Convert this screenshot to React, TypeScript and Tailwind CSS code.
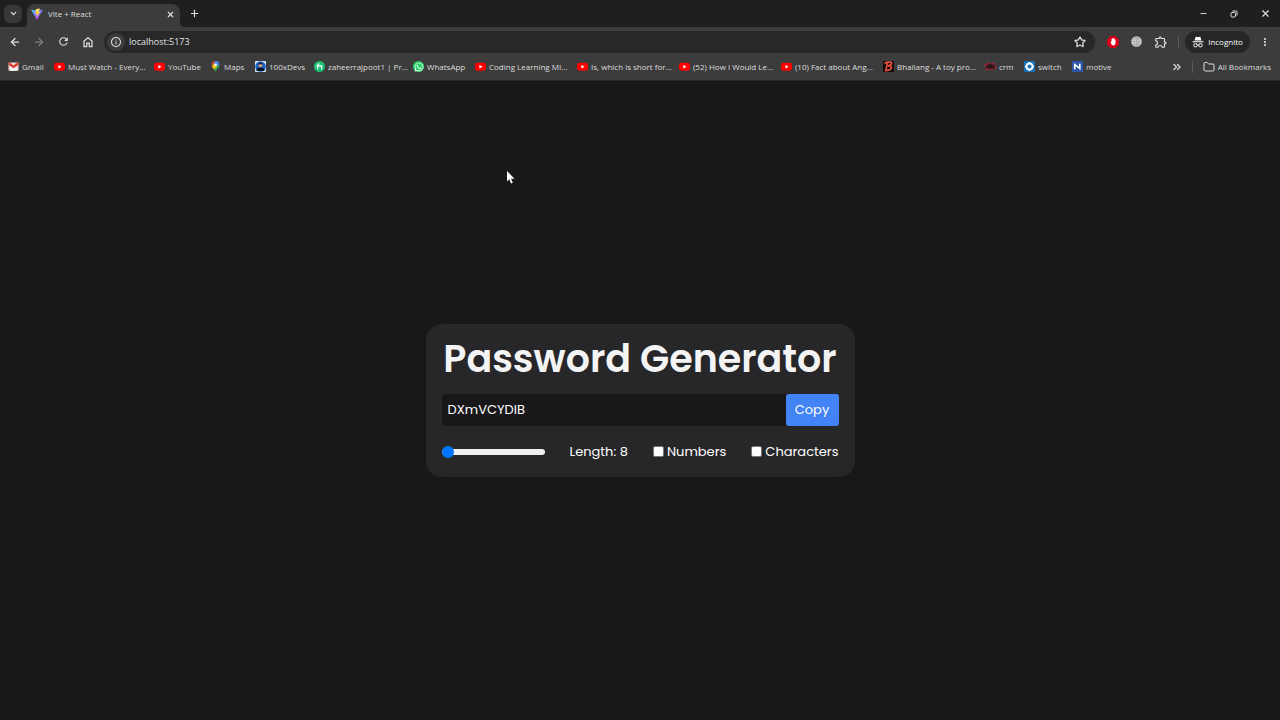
import React, { useState } from 'react';
import {
  ArrowLeft,
  ArrowRight,
  ChevronDown,
  ChevronsRight,
  Folder,
  Minus,
  Plus,
  Star,
  X,
} from 'lucide-react';
import { FaWhatsapp } from 'react-icons/fa';
import { MdInfoOutline, MdMoreVert, MdOutlineExtension, MdRefresh } from 'react-icons/md';

const ViteIcon = () => (
  <svg viewBox="0 0 24 24" className="size-3 shrink-0" aria-hidden="true">
    <defs>
      <linearGradient id="vite-body" x1="0" y1="0" x2="0.6" y2="1">
        <stop offset="0" stopColor="#41d1ff" />
        <stop offset="1" stopColor="#bd34fe" />
      </linearGradient>
      <linearGradient id="vite-bolt" x1="0.4" y1="0" x2="0.6" y2="1">
        <stop offset="0" stopColor="#ffea83" />
        <stop offset="1" stopColor="#ffa800" />
      </linearGradient>
    </defs>
    <path d="M23.3 4.3 12.5 23a.6.6 0 0 1-1 0L.6 4.3a.6.6 0 0 1 .6-.9l10.7 1.9 10.8-1.9c.5-.1.9.4.6.9Z" fill="url(#vite-body)" />
    <path d="m18 .8-8.600 1.500-.5 9.200 2.400-.5-.7 3.300 1.600-.4-1 5.200 7.200-11.400-3.200.6L18 .8Z" fill="url(#vite-bolt)" />
  </svg>
);

const HomeIcon = () => (
  <svg viewBox="0 0 24 24" className="size-3" fill="none" stroke="currentColor" strokeWidth="2.500" aria-hidden="true">
    <path d="M4 10v11h5.500v-7h5v7H20V10l-8-6.500Z" />
  </svg>
);

const GmailIcon = () => (
  <svg viewBox="0 0 24 24" className="size-[11px] shrink-0" aria-hidden="true">
    <rect x="1" y="3" width="22" height="18" rx="2" fill="#f1d9d7" />
    <path d="M1 5c0-2 2-2.500 3-1.500L12 10l8-6.500c1-1 3-.5 3 1.500v3l-11 8L1 8Z" fill="#d93e34" />
    <path d="M5 12v9h14v-9l-7 5Z" fill="#fafafa" />
  </svg>
);

const YouTubeIcon = () => (
  <svg viewBox="0 0 24 24" className="size-[11px] shrink-0" aria-hidden="true">
    <rect x="0" y="4" width="24" height="17" rx="5" fill="#f00" />
    <path d="m9.500 8.500 7 4-7 4Z" fill="#fff" />
  </svg>
);

const MapsIcon = () => (
  <svg viewBox="0 0 24 24" className="size-[11px] shrink-0" aria-hidden="true">
    <clipPath id="maps-pin">
      <path d="M12 0a8.500 8.500 0 0 0-8.500 8.500C3.500 15 10 17 12 24c2-7 8.500-9 8.500-15.500A8.500 8.500 0 0 0 12 0Z" />
    </clipPath>
    <g clipPath="url(#maps-pin)">
      <path d="M0 0h24v24H0Z" fill="#34a853" />
      <path d="M0 0h14L3 13H0Z" fill="#ea4335" />
      <path d="M10 0h14v6l-8 5-6-5Z" fill="#4285f4" />
      <path d="m3 13 6-7 6 6-8 8Z" fill="#fbbc04" />
    </g>
    <circle cx="12" cy="8.500" r="3" fill="#fff" />
  </svg>
);

const DevsIcon = () => (
  <svg viewBox="0 0 24 24" className="size-[11px] shrink-0" aria-hidden="true">
    <rect width="24" height="24" rx="2" fill="#dbe8f5" />
    <circle cx="12" cy="12" r="11.500" fill="#1463c8" />
    <path d="M3 22c1-7 5-8 9-8s8 1 9 8Z" fill="#0b1220" />
    <circle cx="12" cy="9.500" r="4.500" fill="#c99a80" />
    <path d="M7 9c-1-8 11-8 10 0l-2-2H9Z" fill="#111827" />
  </svg>
);

const FiverrIcon = () => (
  <svg viewBox="0 0 24 24" className="size-[11px] shrink-0" aria-hidden="true">
    <circle cx="12" cy="12" r="12" fill="#1dbf73" />
    <path d="M8 18V9c0-2 1-3 4-3M5.500 10.500h11V18" fill="none" stroke="#fff" strokeWidth="2.500" />
  </svg>
);

const WhatsAppIcon = () => (
  <span className="flex size-[11px] shrink-0 items-center justify-center rounded-full bg-[#25d366] text-white">
    <FaWhatsapp size={10} />
  </span>
);

const BhailangIcon = () => (
  <svg viewBox="0 0 24 24" className="size-[11px] shrink-0" aria-hidden="true">
    <rect width="24" height="24" fill="#150b0b" />
    <path d="M3 5c6-3 16-4 16 0 0 3-5 5-8 6 4-1 8 0 7 4s-8 6-14 6M10 4 6 21" fill="none" stroke="#f0503c" strokeWidth="3.500" />
  </svg>
);

const CrmIcon = () => (
  <svg viewBox="0 0 24 24" className="size-[11px] shrink-0" aria-hidden="true">
    <rect x="1" y="6" width="22" height="12" rx="4" fill="#3a1a20" stroke="#c3202f" strokeWidth="2.500" strokeDasharray="7 3" />
    <path d="m8 15 4-6 4 6" fill="none" stroke="#171717" strokeWidth="3" />
  </svg>
);

const SwitchIcon = () => (
  <svg viewBox="0 0 24 24" className="size-[11px] shrink-0" aria-hidden="true">
    <rect width="24" height="24" rx="3" fill="#1673b8" />
    <circle cx="12" cy="12" r="6.500" fill="none" stroke="#fff" strokeWidth="4" />
    <path d="M12 2v20M2 12h20" stroke="#fff" strokeWidth="3" strokeDasharray="4 12" />
  </svg>
);

const MotiveIcon = () => (
  <svg viewBox="0 0 24 24" className="size-[11px] shrink-0" aria-hidden="true">
    <rect width="24" height="24" fill="#3155a6" />
    <path d="M6 18V8l11 8V6" fill="none" stroke="#fff" strokeWidth="3.500" />
  </svg>
);

const IncognitoIcon = () => (
  <svg viewBox="0 0 24 24" className="size-3 shrink-0" fill="currentColor" aria-hidden="true">
    <path d="M7 2.500c.3-.8 1-1 1.700-.8l3.300.9 3.300-.9c.7-.2 1.400 0 1.700.8L19 9H5ZM1 10.500h22v2H1Z" />
    <path d="M10.500 18.500c1-.7 2-.7 3 0" fill="none" stroke="currentColor" strokeWidth="2" />
    <circle cx="7" cy="18.500" r="3.500" fill="none" stroke="currentColor" strokeWidth="2" />
    <circle cx="17" cy="18.500" r="3.500" fill="none" stroke="currentColor" strokeWidth="2" />
  </svg>
);

const AdBlockIcon = () => (
  <svg viewBox="0 0 24 24" className="size-3" aria-hidden="true">
    <path d="M7 0h10l7 7v10l-7 7H7l-7-7V7Z" fill="#d7001c" />
    <path d="M7 12l1-1 1 1V6h2V4h2v1h2v2h2v7c0 3-2 5-4 5-3 0-4-2-6-7Z" fill="#fff" />
  </svg>
);

const GlobeIcon = () => (
  <svg viewBox="0 0 24 24" className="size-[11px]" aria-hidden="true">
    <circle cx="12" cy="12" r="11.500" fill="#d0d0d0" />
    <path d="M12 1v22M1 12h22M3 6h18M3 18h18M12 1c-7 6-7 16 0 22M12 1c7 6 7 16 0 22" fill="none" stroke="#a0a0a0" strokeWidth="1.500" />
  </svg>
);

const RestoreIcon = () => (
  <svg viewBox="0 0 8 8" className="size-2" fill="none" stroke="currentColor" aria-hidden="true">
    <rect x="1" y="2.500" width="4.500" height="4.500" rx="1" />
    <path d="M2.500 1H6a1 1 0 0 1 1 1v3.500" />
  </svg>
);

const bookmarks = [
  { label: 'Gmail', Icon: GmailIcon, width: 'w-[46px]' },
  { label: 'Must Watch - Every...', Icon: YouTubeIcon, width: 'w-[100px]' },
  { label: 'YouTube', Icon: YouTubeIcon, width: 'w-[56px]' },
  { label: 'Maps', Icon: MapsIcon, width: 'w-[45px]' },
  { label: '100xDevs', Icon: DevsIcon, width: 'w-[59px]' },
  { label: 'zaheerrajpoot1 | Pr...', Icon: FiverrIcon, width: 'w-[99px]' },
  { label: 'WhatsApp', Icon: WhatsAppIcon, width: 'w-[62px]' },
  { label: 'Coding Learning MI...', Icon: YouTubeIcon, width: 'w-[102px]' },
  { label: 'Is, which is short for...', Icon: YouTubeIcon, width: 'w-[102px]' },
  { label: '(52) How I Would Le...', Icon: YouTubeIcon, width: 'w-[102px]' },
  { label: '(10) Fact about Ang...', Icon: YouTubeIcon, width: 'w-[102px]' },
  { label: 'Bhailang - A toy pro...', Icon: BhailangIcon, width: 'w-[102px]' },
  { label: 'crm', Icon: CrmIcon, width: 'w-[39px]' },
  { label: 'switch', Icon: SwitchIcon, width: 'w-[48px]' },
  { label: 'motive', Icon: MotiveIcon, width: 'w-[48px]' },
];

const TabStrip = () => (
  <div className="flex h-[27px] items-center bg-[#1f1f1f] pl-1">
    <button type="button" aria-label="Search tabs" className="flex size-[18px] items-center justify-center rounded-md bg-[#383838]">
      <ChevronDown size={9} strokeWidth={3.5} />
    </button>
    <div className="relative ml-[5px] flex h-[23px] w-[153px] items-center gap-[5px] self-end rounded-t-lg bg-[#3c3c3c] px-1 pb-[3px]">
      <span className="absolute bottom-0 -left-1 size-1 rounded-br shadow-[2px_2px_0_#3c3c3c]" />
      <ViteIcon />
      <span className="flex-1 text-[8px] leading-3">Vite + React</span>
      <button type="button" aria-label="Close tab" className="flex size-3 items-center justify-center">
        <X size={9} strokeWidth={3} />
      </button>
      <span className="absolute -right-1 bottom-0 size-1 rounded-bl shadow-[-2px_2px_0_#3c3c3c]" />
    </div>
    <button type="button" aria-label="New tab" className="ml-2 flex size-3 items-center justify-center">
      <Plus size={11} strokeWidth={2.5} />
    </button>
    <div className="ml-auto flex items-center gap-[19px] pr-[9px]">
      <button type="button" aria-label="Minimize" className="flex size-3 items-center justify-center">
        <Minus size={9} strokeWidth={2.5} />
      </button>
      <button type="button" aria-label="Restore" className="flex size-3 items-center justify-center">
        <RestoreIcon />
      </button>
      <button type="button" aria-label="Close window" className="flex size-3 items-center justify-center">
        <X size={11} strokeWidth={2.5} />
      </button>
    </div>
  </div>
);

const Toolbar = () => {
  const [url, setUrl] = useState('localhost:5173');

  return (
    <div className="flex h-[29px] items-center bg-[#3c3c3c] px-[9px]">
      <div className="flex items-center gap-3">
        <button type="button" aria-label="Back">
          <ArrowLeft size={12} strokeWidth={2.5} />
        </button>
        <button type="button" aria-label="Forward" className="text-[#7c7c7c]">
          <ArrowRight size={12} strokeWidth={2.5} />
        </button>
        <button type="button" aria-label="Reload">
          <MdRefresh size={13} />
        </button>
        <button type="button" aria-label="Home">
          <HomeIcon />
        </button>
      </div>
      <div className="ml-[10px] flex h-[22px] flex-1 items-center rounded-full bg-[#282828] pr-[9px] pl-[3px]">
        <button type="button" aria-label="Site information" className="flex size-[18px] items-center justify-center rounded-full bg-[#3c3c3c]">
          <MdInfoOutline size={12} />
        </button>
        <input
          type="text"
          aria-label="Address"
          value={url}
          onChange={(e) => setUrl(e.target.value)}
          className="ml-1 flex-1 bg-transparent text-[9px] leading-3 text-[#e3e3e3] focus:outline-none"
        />
        <button type="button" aria-label="Bookmark this tab">
          <Star size={12} strokeWidth={2.5} />
        </button>
      </div>
      <div className="ml-3 flex items-center gap-3">
        <button type="button" aria-label="Ad blocker">
          <AdBlockIcon />
        </button>
        <button type="button" aria-label="Globe extension">
          <GlobeIcon />
        </button>
        <button type="button" aria-label="Extensions">
          <MdOutlineExtension size={14} />
        </button>
      </div>
      <span className="ml-[10px] h-3 w-px bg-[#5a5a5a]" />
      <button type="button" className="ml-[6px] flex h-[22px] w-[65px] items-center justify-center gap-1 rounded-full bg-[#262626] text-[8px] text-white">
        <IncognitoIcon />
        Incognito
      </button>
      <button type="button" aria-label="Menu" className="ml-[9px]">
        <MdMoreVert size={12} />
      </button>
    </div>
  );
};

const BookmarksBar = () => (
  <nav className="flex h-6 items-center overflow-hidden bg-[#3c3c3c] pr-[9px] pb-[3px] pl-2 text-[8px] leading-3 whitespace-nowrap">
    {bookmarks.map(({ label, Icon, width }) => (
      <a key={label} href="#" className={`flex shrink-0 items-center gap-[3px] ${width}`}>
        <Icon />
        {label}
      </a>
    ))}
    <button type="button" aria-label="More bookmarks" className="ml-auto">
      <ChevronsRight size={12} strokeWidth={2.5} />
    </button>
    <span className="ml-[9px] h-3 w-px bg-[#5a5a5a]" />
    <a href="#" className="ml-[10px] flex items-center gap-[3px]">
      <Folder size={12} />
      All Bookmarks
    </a>
  </nav>
);

const letters = 'ABCDEFGHIJKLMNOPQRSTUVWXYZabcdefghijklmnopqrstuvwxyz';

const PasswordGenerator = () => {
  const [length, setLength] = useState(8);
  const [numbers, setNumbers] = useState(false);
  const [characters, setCharacters] = useState(false);
  const [password, setPassword] = useState('DXmVCYDlB');

  const generate = (len: number, withNumbers: boolean, withCharacters: boolean) => {
    let pool = letters;
    if (withNumbers) pool += '0123456789';
    if (withCharacters) pool += '!@#$%^&*-_+=[]{}~`';
    let result = '';
    for (let i = 0; i < len; i++) {
      result += pool.charAt(Math.floor(Math.random() * pool.length));
    }
    setPassword(result);
  };

  const checkboxClass =
    'size-[11px] appearance-none rounded-[2px] border border-[#767676] bg-white checked:bg-[#0075ff]';

  return (
    <div className="flex w-full max-w-[429px] flex-col gap-[13px] rounded-2xl bg-[#27272a] px-4 py-[13px] font-['Poppins',sans-serif] text-white">
      <h1 className="text-center text-[38px] leading-[44px] font-semibold whitespace-nowrap text-[#f4f4f5]">
        Password Generator
      </h1>
      <div className="flex h-8">
        <input
          type="text"
          readOnly
          aria-label="Password"
          value={password}
          className="min-w-0 flex-1 rounded-l-sm bg-[#18181b] px-[6px] text-[13px] focus:outline-none"
        />
        <button
          type="button"
          onClick={() => navigator.clipboard.writeText(password)}
          className="w-[53px] rounded-[3px] bg-[#4284f5] text-[13px]"
        >
          Copy
        </button>
      </div>
      <div className="flex h-[25px] items-center justify-between text-[13px] leading-5">
        <input
          id="length"
          type="range"
          min={8}
          max={100}
          value={length}
          onChange={(e) => {
            const next = Number(e.target.value);
            setLength(next);
            generate(next, numbers, characters);
          }}
          className="h-[6px] w-[103px] appearance-none rounded-full bg-[#efefef] [&::-webkit-slider-thumb]:size-3 [&::-webkit-slider-thumb]:appearance-none [&::-webkit-slider-thumb]:rounded-full [&::-webkit-slider-thumb]:bg-[#0075ff]"
        />
        <label htmlFor="length">Length: {length}</label>
        <label className="flex items-center gap-[3px]">
          <input
            type="checkbox"
            checked={numbers}
            onChange={(e) => {
              setNumbers(e.target.checked);
              generate(length, e.target.checked, characters);
            }}
            className={checkboxClass}
          />
          Numbers
        </label>
        <label className="flex items-center gap-[3px]">
          <input
            type="checkbox"
            checked={characters}
            onChange={(e) => {
              setCharacters(e.target.checked);
              generate(length, numbers, e.target.checked);
            }}
            className={checkboxClass}
          />
          Characters
        </label>
      </div>
    </div>
  );
};

const App: React.FC = () => {
  return (
    <div className="relative flex min-h-screen flex-col bg-[#18181b]">
      <header className="border-b border-[#29292b] font-['Segoe_UI','Open_Sans',sans-serif] text-[#dedede]">
        <TabStrip />
        <Toolbar />
        <BookmarksBar />
      </header>
      <main className="flex flex-1 items-center justify-center">
        <PasswordGenerator />
      </main>
      <svg viewBox="0 0 8 13" className="pointer-events-none absolute top-[171px] left-[507px] h-[13px] w-2" aria-hidden="true">
        <path d="M0 0v10.500l2.300-2.200L4 12.500l1.800-.8L4 7.700h3.500Z" fill="#fff" />
      </svg>
    </div>
  );
};

export default App;
